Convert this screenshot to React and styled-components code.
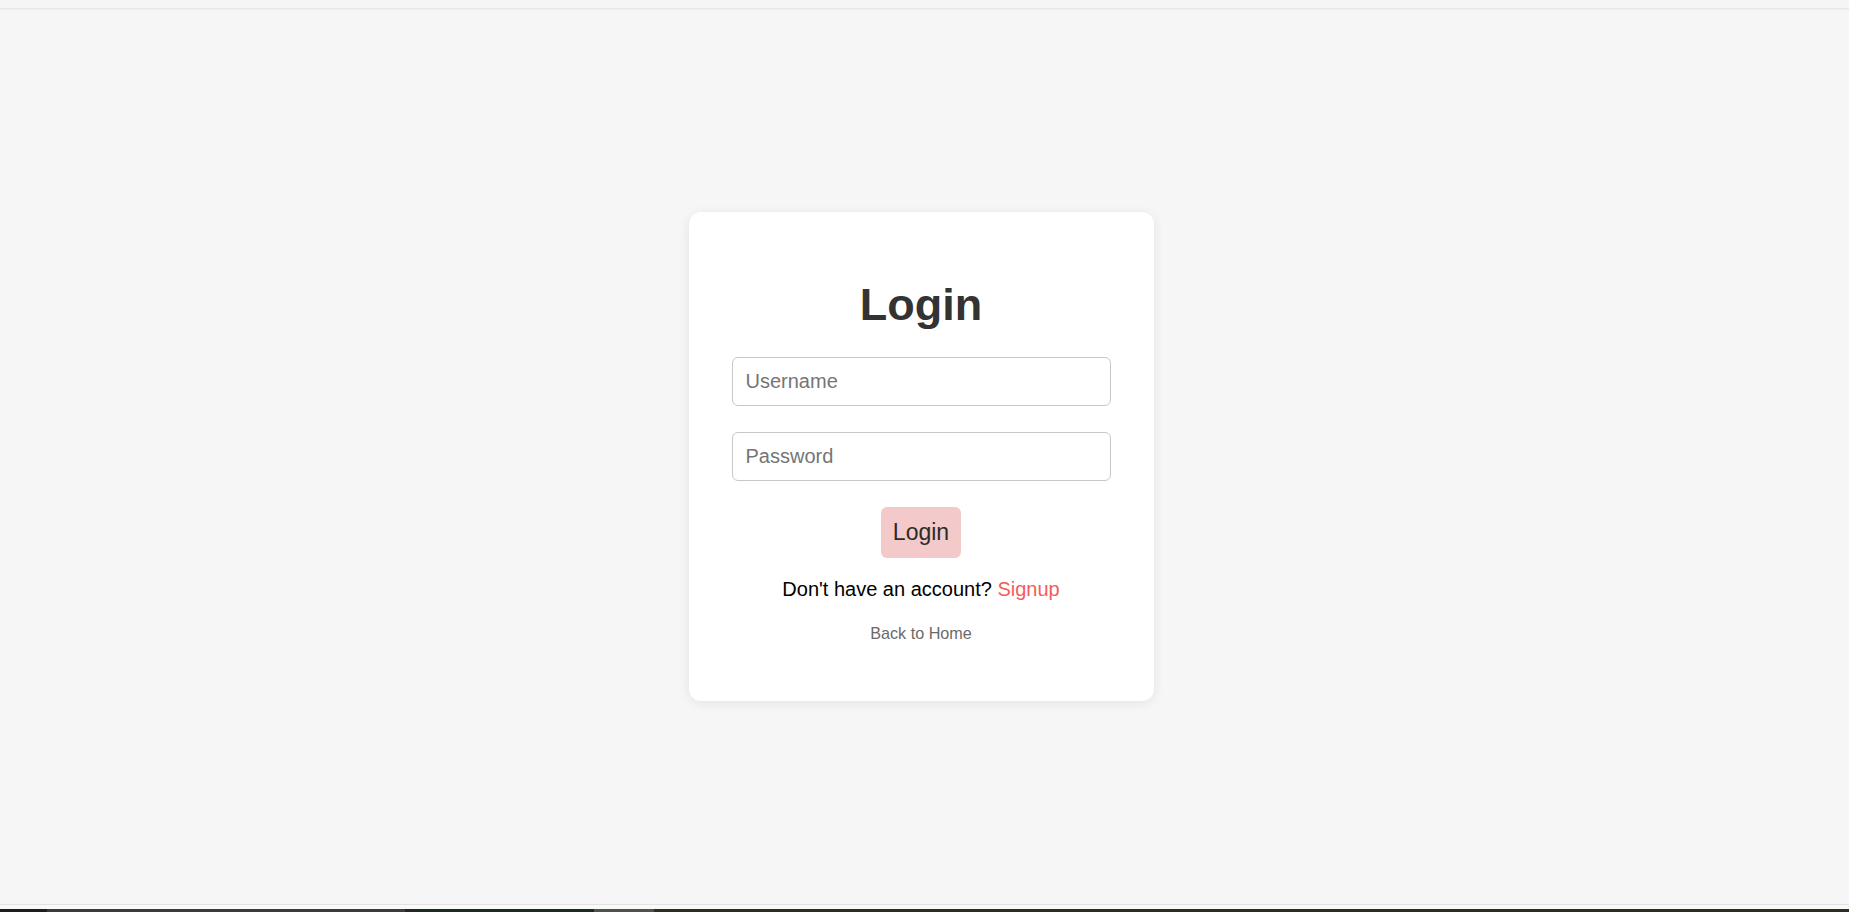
import React from 'react';
import styled, { createGlobalStyle } from 'styled-components';

const GlobalStyle = createGlobalStyle`
  html, body {
    margin: 0;
    padding: 0;
    background: #f6f6f6;
    font-family: "Liberation Sans", Arial, sans-serif;
  }
  * { box-sizing: border-box; }
`;

const Page = styled.div`
  height: 100vh;
  display: flex;
  flex-direction: column;
  background: #f6f6f6;
`;

const TopEdge = styled.div`
  height: 9px;
  flex-shrink: 0;
  background: #f5f5f5;
  border-bottom: 1px solid #e6e6e6;
  box-shadow: 0 1px 2px rgba(0, 0, 0, 0.04);
`;

const Main = styled.main`
  flex: 1;
  display: flex;
  align-items: center;
  justify-content: center;
  padding-right: 7px;
`;

const BottomEdge = styled.div`
  height: 8px;
  flex-shrink: 0;
  display: flex;
  flex-direction: column;
  border-top: 1px solid #e2e2e2;
  background: #f9f9f9;
`;

const Taskbar = styled.div`
  margin-top: auto;
  height: 3px;
  display: flex;
`;

const Strip = styled.div`
  width: ${p => p.w};
  flex: ${p => (p.grow ? 1 : 'none')};
  background: ${p => p.c};
`;

const Card = styled.div`
  width: 465px;
  background: #fff;
  border-radius: 12px;
  box-shadow: 0 2px 12px rgba(0, 0, 0, 0.08);
  padding: 67px 43px 58px;
  display: flex;
  flex-direction: column;
  align-items: center;
`;

const Title = styled.h2`
  margin: 0 0 26px;
  font-size: 45px;
  font-weight: 700;
  color: #333;
`;

const Form = styled.form`
  width: 100%;
  display: flex;
  flex-direction: column;
  align-items: center;
  gap: 26px;
`;

const Input = styled.input`
  width: 100%;
  height: 49px;
  padding: 12px 13px;
  font-family: inherit;
  font-size: 20px;
  color: #333;
  border: 1px solid #c8c8c8;
  border-radius: 6px;
  outline: none;

  ::placeholder {
    color: #757575;
  }
`;

const Button = styled.button`
  padding: 12px 12px;
  font-family: inherit;
  font-size: 23px;
  color: #2b2b2b;
  background: #f3c9c9;
  border: none;
  border-radius: 6px;
  cursor: pointer;
`;

const SignupText = styled.p`
  margin: 20px 0 0;
  font-size: 20px;
  color: #000;

  a {
    color: #f45c5c;
    text-decoration: none;
  }
`;

const BackLink = styled.a`
  margin-top: 23px;
  font-size: 16.2px;
  color: #6a6a6a;
  text-decoration: none;
`;

export default function App() {
  return (
    <Page>
      <GlobalStyle />
      <TopEdge />
      <Main>
        <Card>
          <Title>Login</Title>
          <Form onSubmit={e => e.preventDefault()}>
            <Input type="text" placeholder="Username" />
            <Input type="password" placeholder="Password" />
            <Button type="submit">Login</Button>
          </Form>
          <SignupText>
            Don't have an account? <a href="#signup">Signup</a>
          </SignupText>
          <BackLink href="#home">Back to Home</BackLink>
        </Card>
      </Main>
      <BottomEdge>
        <Taskbar>
          <Strip w="47px" c="#1d1d1d" />
          <Strip w="358px" c="#3b3b3b" />
          <Strip w="189px" c="#1f2a1e" />
          <Strip w="60px" c="#4d544a" />
          <Strip grow c="#28301f" />
        </Taskbar>
      </BottomEdge>
    </Page>
  );
}
